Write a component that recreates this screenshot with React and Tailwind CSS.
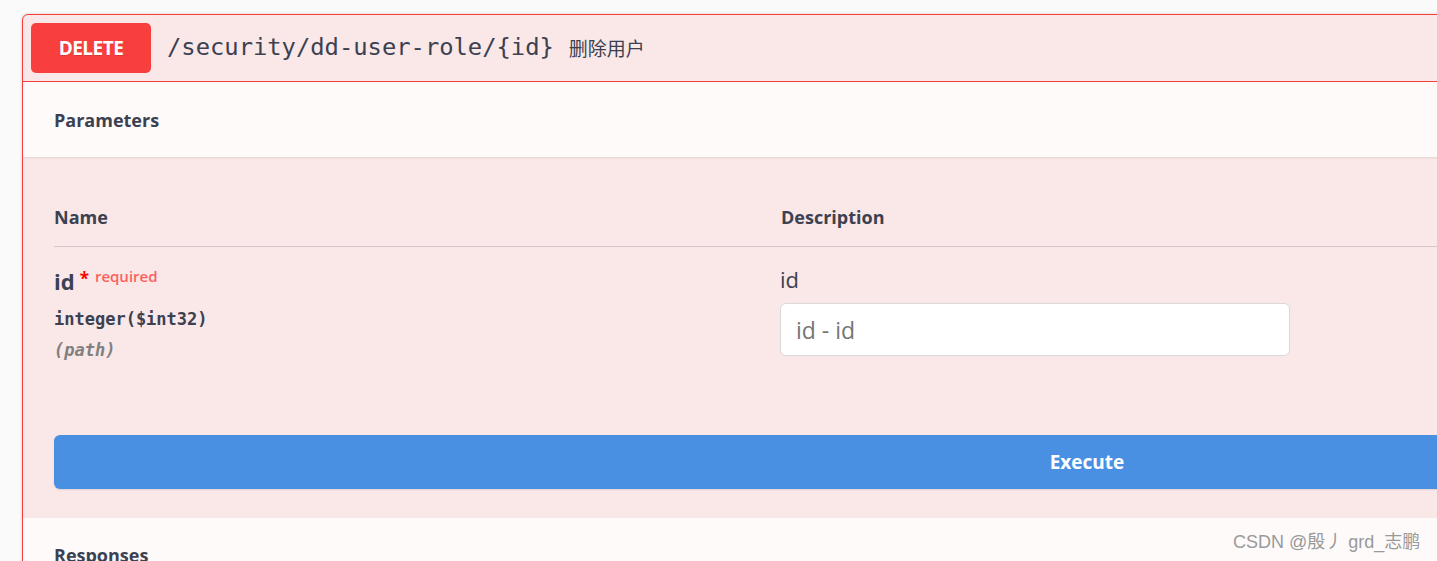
export default function App() {
  const sans = { fontFamily: '"Open Sans", "Noto Sans", "Noto Sans CJK SC", sans-serif' };
  const mono = { fontFamily: '"DejaVu Sans Mono", "Liberation Mono", monospace' };

  return (
    <div className="relative h-[561px] w-full overflow-hidden bg-[#fafafa]" style={sans}>
      <div className="ml-[22px] mt-[14px] w-[2130px] overflow-hidden rounded-[6px] border border-[#f93e3e] bg-[#fae7e7] text-[#3b4151] shadow-[0_0_3px_rgba(0,0,0,0.19)]">
        {/* summary */}
        <div className="flex h-[67px] items-center border-b border-[#f93e3e] px-[8px]">
          <div className="flex h-[50px] w-[120px] items-center justify-center rounded-[5px] bg-[#f93e3e] text-[19px] font-bold tracking-[-0.5px] text-white [text-shadow:0_1px_0_rgba(0,0,0,0.15)]">
            DELETE
          </div>
          <span className="ml-[16px] text-[23.8px] text-[#3b4151]" style={mono}>
            /security/dd-user-role/{"{id}"}
          </span>
          <span className="ml-[15px] text-[19px] text-[#3b4151]" style={{ fontFamily: '"Noto Sans CJK SC", sans-serif' }}>
            删除用户
          </span>
        </div>

        {/* parameters header */}
        <div className="flex h-[75px] items-center bg-[#fefafa] px-[31px] pt-[2px] shadow-[0_1px_2px_rgba(0,0,0,0.1)]">
          <h4 className="text-[18px] font-bold">Parameters</h4>
        </div>

        {/* table */}
        <div className="px-[31px] pt-[35px]">
          <div className="flex h-[55px] items-center border-b border-[#3b4151]/20 pb-[4px]">
            <div className="w-[727px] text-[18px] font-bold">Name</div>
            <div className="text-[18px] font-bold">Description</div>
          </div>
          <div className="flex pt-[17px]">
            <div className="w-[726px]">
              <div className="flex items-start">
                <span className="text-[22px] font-bold leading-[34px]">id</span>
                <span className="ml-[5px] mt-[2px] text-[17px] font-bold text-[#ff0000]">*</span>
                <span className="ml-[6px] text-[15px] font-semibold leading-[24px] text-[#ff0000]/60">required</span>
              </div>
              <div className="mt-[9px] text-[17px] font-semibold" style={mono}>
                integer($int32)
              </div>
              <div className="mt-[5px] text-[17px] font-semibold italic text-[#808080]" style={mono}>
                (path)
              </div>
            </div>
            <div>
              <p className="text-[22px] leading-[30px]">id</p>
              <input
                placeholder="id - id"
                className="mt-[9px] h-[53px] w-[510px] rounded-[6px] border border-[#d9d9d9] bg-white px-[15px] text-[23px] text-[#3b4151] outline-none placeholder:text-[#757575]"
                style={sans}
              />
            </div>
          </div>

          <div className="pb-[29px] pt-[72px]">
            <button className="flex h-[54px] w-full items-center justify-center rounded-[6px] bg-[#4990e2] text-[19px] font-bold text-white shadow-[0_1px_2px_rgba(0,0,0,0.1)]">
              Execute
            </button>
          </div>
        </div>

        {/* responses */}
        <div className="flex h-[75px] items-center bg-[#fefafa] px-[31px] shadow-[0_1px_2px_rgba(0,0,0,0.1)]">
          <h4 className="text-[18px] font-bold">Responses</h4>
        </div>
      </div>

      <div
        className="absolute left-[1233px] top-[529px] text-[18px] text-[#999999] [text-shadow:0_0_2px_#ffffff]"
        style={{ fontFamily: '"Liberation Sans", "Noto Sans CJK SC", sans-serif' }}
      >
        CSDN @殷丿 grd_志鹏
      </div>
    </div>
  );
}
